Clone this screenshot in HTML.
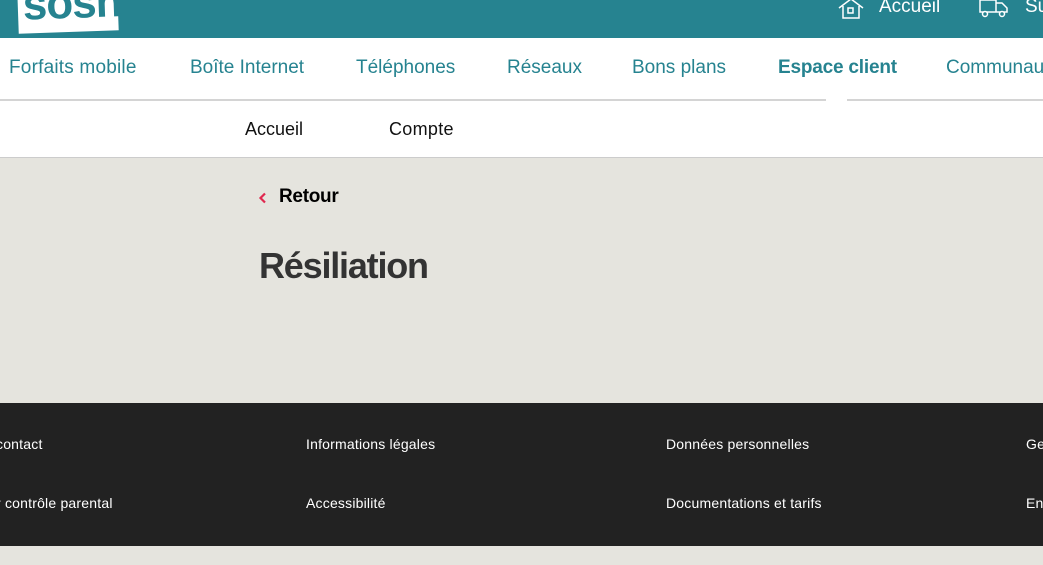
<!DOCTYPE html>
<html><head><meta charset="utf-8"><style>
*{margin:0;padding:0;box-sizing:border-box}
body{width:1043px;height:565px;overflow:hidden;background:#e5e4de;font-family:"Liberation Sans",sans-serif;position:relative}
.a{position:absolute;white-space:nowrap}
.top{position:absolute;left:0;top:0;width:1043px;height:38px;background:#268390}
.logo{position:absolute;left:18px;top:-10px;width:100px;height:42px;background:#fff;transform:rotate(-2deg)}
.logo span{position:absolute;left:5px;top:-6px;font-weight:bold;font-size:44px;color:#268390;line-height:40px;letter-spacing:-1px}
.nav{position:absolute;left:0;top:38px;width:1043px;height:120px;background:#fff}
.foot{position:absolute;left:0;top:403px;width:1043px;height:143px;background:#222}
.foot .a{color:#fff;font-size:14px;letter-spacing:0.2px}
</style></head><body>
<div class="top">
<div class="logo"><span>sosh</span></div>
<svg class="a" style="left:837px;top:-2px" width="28" height="22" viewBox="0 0 28 22"><path d="M2 10 L14 1 L26 10 M6 8 V20 H22 V8" fill="none" stroke="#fff" stroke-width="1.5"/><rect x="11" y="10" width="5" height="5" fill="none" stroke="#fff" stroke-width="1.5"/></svg>
<div class="a" style="left:879px;top:-4px;color:#fff;font-size:19px">Accueil</div>
<svg class="a" style="left:978px;top:-2px" width="32" height="20" viewBox="0 0 32 20"><path d="M2 2 H18 V14 H2 Z M18 5 H24 L29 10 V14 H18" fill="none" stroke="#fff" stroke-width="1.5"/><circle cx="7" cy="16" r="2.5" fill="#268390" stroke="#fff" stroke-width="1.5"/><circle cx="24" cy="16" r="2.5" fill="#268390" stroke="#fff" stroke-width="1.5"/></svg>
<div class="a" style="left:1025px;top:-4px;color:#fff;font-size:19px">Su</div>
</div>
<div class="nav">
<div class="a" style="left:9px;top:19px;font-size:19px;color:#268390;letter-spacing:0.2px">Forfaits mobile</div>
<div class="a" style="left:190px;top:19px;font-size:19px;color:#268390">Boîte Internet</div>
<div class="a" style="left:356px;top:19px;font-size:19px;color:#268390">Téléphones</div>
<div class="a" style="left:507px;top:19px;font-size:19px;color:#268390">Réseaux</div>
<div class="a" style="left:632px;top:19px;font-size:19px;color:#268390">Bons plans</div>
<div class="a" style="left:778px;top:19px;font-size:19px;color:#268390;font-weight:bold;letter-spacing:-0.2px">Espace client</div>
<div class="a" style="left:946px;top:19px;font-size:19px;color:#268390">Communau</div>
<div class="a" style="left:0;top:61px;width:826px;height:2px;background:#d4d4d4"></div>
<div class="a" style="left:847px;top:61px;width:196px;height:2px;background:#d4d4d4"></div>
<div class="a" style="left:245px;top:81px;font-size:18px;color:#111">Accueil</div>
<div class="a" style="left:389px;top:81px;font-size:18px;color:#111;letter-spacing:0.3px">Compte</div>
<div class="a" style="left:0;top:119px;width:1043px;height:1px;background:#ccc"></div>
</div>
<svg class="a" style="left:258px;top:192px" width="10" height="12" viewBox="0 0 10 12"><path d="M7 1.5 L2.5 6 L7 10.5" fill="none" stroke="#e0284f" stroke-width="2.2"/></svg>
<div class="a" style="left:279px;top:186px;font-size:19px;font-weight:bold;color:#000;letter-spacing:-0.3px">Retour</div>
<div class="a" style="left:259px;top:245px;font-size:36px;font-weight:bold;color:#333;letter-spacing:-1.2px">Résiliation</div>
<div class="foot">
<div class="a" style="left:-4px;top:33px">contact</div>
<div class="a" style="left:306px;top:33px">Informations légales</div>
<div class="a" style="left:666px;top:33px">Données personnelles</div>
<div class="a" style="left:1026px;top:33px">Ge</div>
<div class="a" style="left:-4px;top:92px">r contrôle parental</div>
<div class="a" style="left:306px;top:92px">Accessibilité</div>
<div class="a" style="left:666px;top:92px">Documentations et tarifs</div>
<div class="a" style="left:1026px;top:92px">En</div>
</div>
</body></html>
